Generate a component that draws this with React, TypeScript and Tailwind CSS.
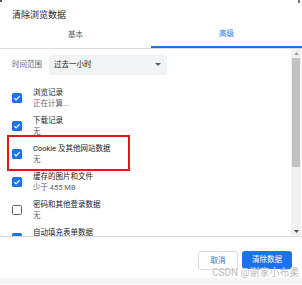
import React from "react";

const Check = ({ on }: { on: boolean }) =>
  on ? (
    <div className="w-[10px] h-[10px] rounded-[1.5px] bg-[#1a73e8] flex items-center justify-center shrink-0">
      <svg width="8" height="8" viewBox="0 0 8 8">
        <path d="M1.3 4.1 L3.1 5.8 L6.7 2.2" fill="none" stroke="white" strokeWidth="1.2" />
      </svg>
    </div>
  ) : (
    <div className="w-[10px] h-[10px] rounded-[1.5px] border-[1.5px] border-[#5f6368] shrink-0" />
  );

const Item = ({ on, title, sub }: { on: boolean; title: string; sub?: string }) => (
  <div className="flex items-center h-[28px] pl-[12px] shrink-0">
    <Check on={on} />
    <div className="ml-[11px] flex flex-col leading-[11px]">
      <span className="text-[#202124]">{title}</span>
      {sub ? <span className="text-[#5f6368]">{sub}</span> : <div className="h-[11px]" />}
    </div>
  </div>
);

export default function App() {
  return (
    <div
      className="relative w-[302px] h-[285px] bg-white overflow-hidden text-[7.5px]"
      style={{ fontFamily: 'Roboto, "Noto Sans CJK SC", sans-serif' }}
    >
      <div className="pl-[12px] pt-[9px] h-[22px] text-[9px] leading-[12px] text-[#202124]">清除浏览数据</div>
      <div className="flex h-[27px] border-b border-[#dadce0]">
        <div className="flex-1 flex items-center justify-center text-[#5f6368]">基本</div>
        <div className="flex-1 flex items-center justify-center text-[#1a73e8] border-b-2 border-[#1a73e8]">高级</div>
      </div>
      <div className="flex h-[188px] border-b border-[#dadce0]">
        <div className="flex-1 overflow-hidden">
          <div className="flex items-center mt-[6px] pl-[12px] h-[20px]">
            <span className="text-[#5f6368] w-[37px]">时间范围</span>
            <div className="w-[118px] h-[20px] rounded-[3px] bg-[#f1f3f4] flex items-center justify-between pl-[5px] pr-[6px] text-[#202124]">
              <span>过去一小时</span>
              <svg width="6" height="4" viewBox="0 0 6 4">
                <path d="M0 0 L6 0 L3 3 Z" fill="#5f6368" />
              </svg>
            </div>
          </div>
          <div className="mt-[9px] flex flex-col">
            <Item on title="浏览记录" sub="正在计算..." />
            <Item on title="下载记录" sub="无" />
            <Item on title="Cookie 及其他网站数据" sub="无" />
            <Item on title="缓存的图片和文件" sub="少于 455 MB" />
            <Item on={false} title="密码和其他登录数据" sub="无" />
            <Item on title="自动填充表单数据" />
          </div>
        </div>
        <div className="w-[10px] bg-[#f1f1f1] flex flex-col items-center mr-[1px]">
          <div className="h-[9px] flex items-center justify-center">
            <svg width="5" height="3" viewBox="0 0 5 3">
              <path d="M0 3 L5 3 L2.5 0 Z" fill="#a3a3a3" />
            </svg>
          </div>
          <div className="w-[8px] h-[109px] bg-[#c1c1c1]" />
          <div className="flex-1" />
          <div className="h-[9px] flex items-center justify-center">
            <svg width="5" height="3" viewBox="0 0 5 3">
              <path d="M0 0 L5 0 L2.5 3 Z" fill="#505050" />
            </svg>
          </div>
        </div>
      </div>
      <div className="flex justify-end items-start gap-[4px] pr-[10px] pt-[14px] h-[41px]">
        <div className="w-[40px] h-[19px] rounded-[3px] border border-[#dadce0] text-[#1a73e8] flex items-center justify-center">取消</div>
        <div className="w-[50px] h-[18px] rounded-[3px] bg-[#1a73e8] text-white flex items-center justify-center">清除数据</div>
      </div>
      <div className="h-[6px] bg-[#f5f5f5]" />
      <div className="absolute left-[7px] top-[135px] w-[123px] h-[36px] border-2 border-[#e8141a]" />
      <div
        className="absolute left-[212px] top-[267px] text-[10px] leading-[12px] text-[#bcbcbc]"
        style={{ textShadow: "0 0 1px #fff" }}
      >
        CSDN @谢家小布柔
      </div>
      <div className="absolute left-0 top-0 w-[2px] h-[2px] bg-[#555]" />
      <div className="absolute left-[298px] top-0 w-[2px] h-[3px] bg-[#777]" />
    </div>
  );
}
